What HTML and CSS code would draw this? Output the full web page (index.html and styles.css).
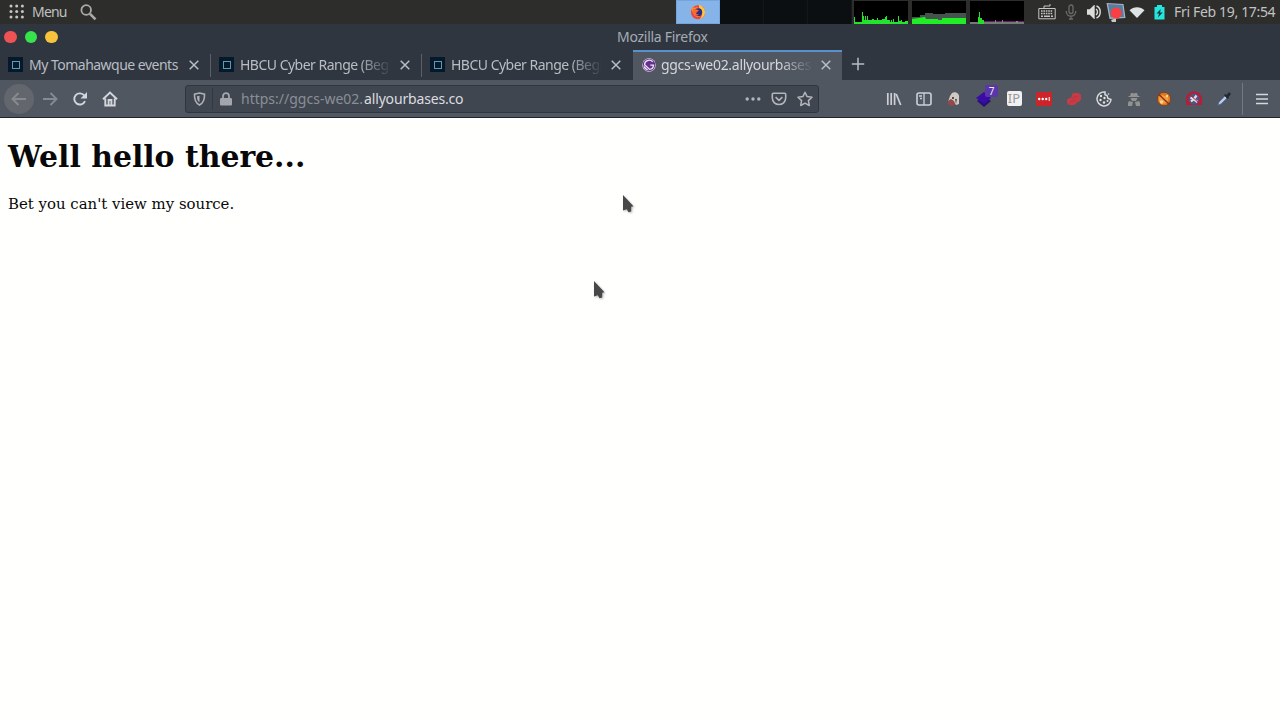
FILE: index.html
```
<!DOCTYPE html>
<html lang="en">
<head>
  <meta charset="UTF-8" />
  <title>Mozilla Firefox</title>
  <link rel="stylesheet" href="styles.css">
</head>
<body>

<div class="panel">
  <div class="launcher">
    <svg class="grid-icon" width="16" height="16" viewBox="0 0 16 16" fill="#c4c5c5"><circle cx="2" cy="2" r="1.5"/><circle cx="7.7" cy="2" r="1.5"/><circle cx="13.4" cy="2" r="1.5"/><circle cx="2" cy="7.5" r="1.5"/><circle cx="7.7" cy="7.5" r="1.5"/><circle cx="13.4" cy="7.5" r="1.5"/><circle cx="2" cy="13" r="1.5"/><circle cx="7.7" cy="13" r="1.5"/><circle cx="13.4" cy="13" r="1.5"/></svg>
    <span class="menu-label">Menu</span>
    <svg width="18" height="18" viewBox="0 0 18 18" fill="none" stroke="#a9aaa9"><circle cx="6.2" cy="7" r="4.8" stroke-width="1.8"/><path d="M10 10.8L15.5 16.3" stroke-width="2.6"/></svg>
  </div>
  <div class="workspaces">
    <div class="workspace current">
      <svg width="16" height="16" viewBox="0 0 16 16"><circle cx="8" cy="8.3" r="7" fill="#e9473c"/><path d="M9 .7C13 2 15.4 5 15 9c-.5 3-2.5 5.5-5.5 6.2C13 12 13 7 9 4z" fill="#ffc43c"/><path d="M1.2 5L3 2l1 2 3-1 2 2 3 2v3c-1 3-6 4-8 1z" fill="#ff8a2d"/><circle cx="8.3" cy="8.2" r="3.9" fill="#302a83"/><path d="M3 5l4 .5 2 1-2 1.4-1 2 3 .7c-2 2-5 1-6-1.6z" fill="#f56b31"/></svg>
    </div>
    <div class="workspace"></div>
    <div class="workspace"></div>
    <div class="workspace"></div>
  </div>
  <div class="graphs">
    <svg width="54" height="23" viewBox="0 0 54 23"><path fill="#777" d="M0 21h54v2H0z"/><path fill="#25e32c" d="M0 23v-7h1v5h7V11h1v4h1v4h1v-4h1v4h1v-4h1v4h4v-1h2v1h3v-2h1v2h4v-1h3v-2h1v-1h1v4h3v2h1v-2h1v2h1v-3h1v3h4v-6h1v5h2v-1h1v2h3v-1h3v4z"/></svg>
    <svg width="54" height="23" viewBox="0 0 54 23"><path fill="#46524d" d="M0 23v-7h8v-2h5v-2h8v1h12v-1h21v11z"/><path fill="#20ed25" d="M0 23v-5l7-1 5-1h1l1 2h12v1h4v-2h24v6z"/></svg>
    <svg width="54" height="23" viewBox="0 0 54 23"><path fill="#777" d="M0 21h54v2H0z"/><path fill="#6c176b" d="M13 20h41v1H13z"/><path fill="#26dd2a" d="M8 23v-7h1v-5h1v6h2v2h2v4z"/><path fill="#7d8a7d" d="M25 19h1v3h-1zM32 19h1v3h-1zM46 20h2v2h-2z"/></svg>
  </div>
  <div class="tray">
    <svg class="keyboard" width="18" height="16" viewBox="0 0 18 16" fill="none" stroke="#c5c6c5"><path d="M.8 4.5h16.4v10.3H.8zM6 4V2h6V0"/><path d="M3 7h12M3 9.5h12" stroke-width="1.6" stroke-dasharray="1.6 .8"/><path d="M3 12.2h2M6 12.2h6M13 12.2h2" stroke-width="1.6"/></svg>
    <svg class="mic" width="12" height="16" viewBox="0 0 12 16" fill="none" stroke="#6b6b6a"><rect x="4" y="1" width="4" height="8.5" rx="2" fill="#2d2d2b" stroke-width="1.3"/><path d="M1.2 7c0 7 9.6 7 9.6 0M6 12v3.5M4 15h4" stroke-width="1.3"/></svg>
    <svg class="speaker" width="15" height="14" viewBox="0 0 15 14" fill="none" stroke="#dcdcdc" stroke-width="1.4"><path d="M.5 5H3l4-4v12L3 9H.5z" fill="#dcdcdc"/><path d="M9 4c2 1.5 2 4.5 0 6M9.5 1c5 2 5 10 0 12"/></svg>
    <svg class="recorder" width="21" height="21" viewBox="0 0 21 21"><path d="M.5 1l17 1 2 14-16 1z" fill="#aab3bb"/><path d="M2 2l14.5 1 1.5 12L4.5 15.5z" fill="#587da5"/><path d="M5 18l5-2v4H6z" fill="#c8c8c8"/><circle cx="10.2" cy="11" r="5.5" fill="#fa3f42"/></svg>
    <svg class="wifi" width="16" height="13" viewBox="0 0 16 13"><path d="M8 12L.5 4.2c4-4 11-4 15 0z" fill="#e0e3e4"/></svg>
    <svg class="battery" width="11" height="15" viewBox="0 0 11 15"><path d="M3 0h5v2h2.5v12.5H.5V2H3z" fill="#24e6df"/><path d="M6.8 4L2.5 8.5H5L4 12.5l4.7-5H6z" fill="#173c3b"/></svg>
    <span class="clock">Fri Feb 19, 17:54</span>
  </div>
</div>

<div class="titlebar">
  <div class="lights">
    <span class="light red"></span>
    <span class="light green"></span>
    <span class="light yellow"></span>
  </div>
  <div class="window-title">Mozilla Firefox</div>
</div>

<div class="tabs">
  <div class="tab">
    <span class="favicon"></span>
    <span class="tab-title">My Tomahawque events</span>
    <svg class="close" width="10" height="10" viewBox="0 0 10 10"><path d="M.7.7l8.6 8.6M9.3.7L.7 9.3"/></svg>
  </div>
  <div class="tab">
    <span class="favicon"></span>
    <span class="tab-title fade">HBCU Cyber Range (Begi</span>
    <svg class="close" width="10" height="10" viewBox="0 0 10 10"><path d="M.7.7l8.6 8.6M9.3.7L.7 9.3"/></svg>
  </div>
  <div class="tab last">
    <span class="favicon"></span>
    <span class="tab-title fade">HBCU Cyber Range (Begi</span>
    <svg class="close" width="10" height="10" viewBox="0 0 10 10"><path d="M.7.7l8.6 8.6M9.3.7L.7 9.3"/></svg>
  </div>
  <div class="tab active">
    <svg class="gatsby" width="14" height="14" viewBox="0 0 14 14"><circle cx="7" cy="7" r="6.7" fill="#eee6f5"/><circle cx="7" cy="7" r="6.2" fill="#65318e"/><path d="M10.7 3.8C7.5.5 2.5 3 2.6 6.6l5 4.8c2-.2 3.7-2 3.9-4.2H8.3" fill="none" stroke="#eee6f5" stroke-width="1.3"/><path d="M1.5 7.3l5.3 5.2c-3 .1-5.2-2.2-5.3-5.2z" fill="#eee6f5"/></svg>
    <span class="tab-title fade">ggcs-we02.allyourbases.</span>
    <svg class="close" width="10" height="10" viewBox="0 0 10 10"><path d="M.7.7l8.6 8.6M9.3.7L.7 9.3"/></svg>
  </div>
  <svg class="new-tab" width="14" height="14" viewBox="0 0 14 14"><path d="M7 .8v12.4M.8 7h12.4"/></svg>
</div>

<div class="toolbar">
  <div class="nav">
    <span class="back"><svg width="16" height="16" viewBox="0 0 16 16"><path d="M15 8H1.5M7.5 2l-6 6 6 6"/></svg></span>
    <svg class="forward" width="16" height="16" viewBox="0 0 16 16"><path d="M1 8h13.5M8.5 2l6 6-6 6"/></svg>
    <svg class="reload" width="16" height="16" viewBox="0 0 16 16"><path d="M13 10.2A5.6 5.6 0 1 1 12.3 4.5"/><path d="M15 1v6.5H8.5z" class="solid"/></svg>
    <svg class="home" width="16" height="16" viewBox="0 0 16 16"><path d="M1 8.3L8 1.5l7 6.8M3.3 7.5v7h9.4v-7"/><path d="M6.6 14.5V9h2.8v5.5"/></svg>
  </div>
  <div class="urlbar">
    <svg class="shield" width="13" height="14" viewBox="0 0 13 14"><path d="M6.5 1l5 1.2c.2 5-1 8.7-5 10.8-4-2.1-5.2-5.8-5-10.8z" fill="none" stroke="#adb0b6" stroke-width="1.6"/><path d="M6.5 3.7v6.6c-2-1.3-2.6-3.3-2.5-6z" fill="#adb0b6"/></svg>
    <span class="divider"></span>
    <svg class="lock" width="12" height="14" viewBox="0 0 12 14"><path d="M3 7V4.2c0-4 6-4 6 0V7" fill="none" stroke="#a3a6ac" stroke-width="1.8"/><rect y="6" width="12" height="7.5" rx="1.2" fill="#a3a6ac"/></svg>
    <span class="url">https://ggcs-we02.<b>allyourbases.co</b></span>
    <div class="page-actions">
      <svg width="16" height="16" viewBox="0 0 16 16" fill="#b2b5ba"><circle cx="2.2" cy="8" r="1.7"/><circle cx="8" cy="8" r="1.7"/><circle cx="13.8" cy="8" r="1.7"/></svg>
      <svg width="16" height="16" viewBox="0 0 16 16" fill="none" stroke="#b2b5ba" stroke-width="1.6"><path d="M2.3 2.3h11.4q1 0 1 1v3.5c0 9-13.4 9-13.4 0V3.3q0-1 1-1z"/><path d="M4.6 6.2L8 9.4l3.4-3.2"/></svg>
      <svg width="16" height="16" viewBox="0 0 16 16" fill="none" stroke="#b2b5ba" stroke-width="1.5" stroke-linejoin="round"><path d="M8 1.2l2.1 4.4 4.9.7-3.6 3.3.9 4.9L8 12.2l-4.3 2.3.9-4.9L1 6.3l4.9-.7z"/></svg>
    </div>
  </div>
  <div class="extensions">
    <span class="ext"><svg width="16" height="16" viewBox="0 0 16 16" stroke="#ccd0d6" stroke-width="1.7"><path d="M1.8 2v12M5.2 2v12M8.6 2v12M10.2 3l4.5 11"/></svg></span>
    <span class="ext"><svg width="16" height="16" viewBox="0 0 16 16" fill="none" stroke="#ccd0d6" stroke-width="1.6"><rect x="1" y="2" width="14" height="12" rx="2"/><path d="M8 2v12M3 5h3M4 7.5h2" stroke-width="1.3"/></svg></span>
    <span class="ext"><svg width="16" height="16" viewBox="0 0 16 16"><path d="M6 2c4-2 8 1 7 5v6l-3 1-2-3-3 2-3-2 2-6z" fill="#d1c8c2"/><path d="M2 10l3-2 3 2 1 4-4 1-3-2z" fill="#944849"/><path d="M6 6h2v2H6zM9 8h2l-1 5z" fill="#514e51"/></svg></span>
    <span class="ext"><svg width="18" height="18" viewBox="0 0 18 18"><path d="M2 11l7-5 7 5-7 6z" fill="#251078"/><path d="M1 8l8-6 7 6-7 6z" fill="#3a0ca7"/></svg><span class="badge">7</span></span>
    <span class="ext"><span class="ip">IP</span></span>
    <span class="ext"><svg width="16" height="14" viewBox="0 0 16 14"><rect width="16" height="14" rx="1.5" fill="#cc2429"/><g fill="#fff"><circle cx="3.2" cy="7" r="1.2"/><circle cx="6.7" cy="7" r="1.2"/><circle cx="10.2" cy="7" r="1.2"/><path d="M12.7 5h1v4h-1z"/></g></svg></span>
    <span class="ext"><svg width="16" height="16" viewBox="0 0 16 16"><path d="M7 2h6l2 2v4l-2 3h-2l-1 2-2 1H3l-2-2V9l2-2h2l1-3z" fill="#c83b45"/><path d="M6 7l6-2M4 11l6-2" stroke="#b43742"/></svg></span>
    <span class="ext"><svg width="16" height="16" viewBox="0 0 16 16"><path d="M9 1a7 7 0 1 0 6 7.5l-3-1-1-3-2-.7z" fill="#4d535b" stroke="#d8dbde" stroke-width="1.5"/><g fill="#e0e2e4"><circle cx="5" cy="5" r="1.2"/><circle cx="8.5" cy="7" r="1.2"/><circle cx="4.5" cy="9" r="1.2"/><circle cx="8" cy="11.5" r="1.2"/><circle cx="11.5" cy="10" r="1"/><circle cx="12.5" cy="3" r=".8"/></g></svg></span>
    <span class="ext"><svg width="14" height="16" viewBox="0 0 14 16" fill="#92928f"><path d="M4 2h2l1 .7L8 2h2l1 3h1.5v1h-11V5H3zM3.5 7h7L9 10H5zM2 10l4 1-1 4H1v-3zM12 10l-4 1 1 4h4v-3z"/></svg></span>
    <span class="ext"><svg width="16" height="16" viewBox="0 0 16 16"><circle cx="8" cy="8" r="6.8" fill="#d97720" stroke="#7c4025"/><path d="M3 6l3-2 3 1 4 2-2 5-5 1-3-3z" fill="#f4a03a"/><circle cx="5.5" cy="11" r="1.7" fill="#f5d4a0"/><circle cx="11" cy="5" r="1.2" fill="#f5d4a0"/><path d="M2.7 3.2l10.5 10" stroke="#8a2c20" stroke-width="1.4"/></svg></span>
    <span class="ext"><svg width="16" height="16" viewBox="0 0 16 16"><path d="M0 14V8C0-2 16-2 16 8v6z" fill="#b91c37"/><circle cx="8" cy="8" r="5.5" fill="#4d5680"/><path d="M4.5 6.5l3 1.5 4 3M10.5 4.5L8 8l-3 2.5" fill="none" stroke="#dde1ed" stroke-width="2.2"/><path d="M3.5 3.5l9 8" stroke="#b91c37"/></svg></span>
    <span class="ext"><svg width="16" height="16" viewBox="0 0 16 16"><path d="M2 14l1-3 6-6 2 2-6 6z" fill="#b6cae9" stroke="#56649a" stroke-width=".7"/><path d="M8 4l1-1 1.5 1L13 1l2 2-2.5 3 .5 1-1.5 1z" fill="#24272e"/></svg></span>
  </div>
  <div class="app-menu"><svg width="12" height="12" viewBox="0 0 12 12" stroke="#d5d8dc" stroke-width="1.6"><path d="M0 1.5h12M0 6h12M0 10.5h12"/></svg></div>
</div>

<div class="page">
  <h1>Well hello there...</h1>
  <p>Bet you can't view my source.</p>
</div>

<svg class="cursor first" width="14" height="20" viewBox="0 0 14 20"><path d="M2 0l10.5 11.3-2.3.5v4.8l-2.7.7-1.7-3L2 15.5z"/></svg>
<svg class="cursor second" width="14" height="20" viewBox="0 0 14 20"><path d="M2 0l10.5 11.3-2.3.5v4.8l-2.7.7-1.7-3L2 15.5z"/></svg>

</body>
</html>
```

FILE: styles.css
```
body {
  margin: 0;
  height: 720px;
  overflow: hidden;
  background: #fffffe;
  font-family: "Noto Sans", sans-serif;
  font-size: 14px;
  color: #b9bdc3;
}

svg {
  display: block;
  flex: none;
}

.panel {
  display: flex;
  height: 24px;
  background: #2d2d2b;
}

.launcher {
  width: 667px;
  padding-left: 9px;
  display: flex;
  align-items: center;
  flex: none;
}

.menu-label {
  width: 48px;
  margin: -1px 0 0 7px;
  letter-spacing: -0.8px;
  color: #bec0c1;
}

.workspaces {
  display: flex;
}

.workspace {
  box-sizing: border-box;
  width: 44px;
  border-right: 1px solid #141618;
  background: #0c0f11;
}

.workspace.current {
  display: flex;
  align-items: center;
  justify-content: center;
  background: #86b3e8;
  border: 1px solid #75a5de;
}

.graphs {
  display: flex;
  gap: 4px;
  padding: 1px 0 0 2px;
}

.graphs svg {
  background: #000;
}

.tray {
  display: flex;
  align-items: center;
}

.keyboard { margin-left: 14px; }
.mic { margin-left: 9px; }
.speaker { margin-left: 10px; }
.recorder { margin-left: 4px; }
.wifi { margin-left: 2px; }
.battery { margin-left: 9px; }

.clock {
  margin: -1px 0 0 9px;
  letter-spacing: -0.33px;
  white-space: nowrap;
  color: #c1c3c4;
}

.titlebar {
  display: flex;
  height: 26px;
  align-items: center;
  background: #2f3640;
}

.lights {
  display: flex;
  gap: 8px;
  width: 613px;
  padding-left: 4px;
}

.light {
  width: 12.5px;
  height: 12.5px;
  border-radius: 50%;
}

.red { background: #ee5253; }
.green { background: #37e34b; }
.yellow { background: #f7c33c; }

.window-title {
  margin-top: -1px;
  letter-spacing: -0.27px;
  color: #a5abb3;
}

.tabs {
  display: flex;
  height: 30px;
  align-items: center;
  background: #2f3640;
}

.tab {
  box-sizing: border-box;
  display: flex;
  align-items: center;
  width: 211px;
  height: 30px;
  padding: 0 0 1px 8px;
  background: linear-gradient(#59606a, #59606a) right 4px / 1px 23px no-repeat;
}

.tab.last {
  background: none;
}

.tab.active {
  width: 209px;
  padding: 0 0 3px 9px;
  background: #515761;
  border-top: 2px solid #5b91cb;
  color: #d4d7da;
}

.favicon {
  box-sizing: border-box;
  display: flex;
  align-items: center;
  justify-content: center;
  width: 15px;
  height: 15px;
  background: #06192b;
}

.favicon::before {
  content: "";
  width: 6px;
  height: 6px;
  border: 1px solid #5b9db7;
}

.tab-title {
  width: 150px;
  margin: -1px 10px 0 6px;
  overflow: hidden;
  white-space: nowrap;
  letter-spacing: -0.51px;
}

.active .tab-title {
  margin-left: 5px;
  letter-spacing: -0.3px;
}

.fade {
  -webkit-mask-image: linear-gradient(to right, #000 118px, transparent 152px);
  mask-image: linear-gradient(to right, #000 118px, transparent 152px);
}

.close, .new-tab {
  fill: none;
  stroke: #b9bdc3;
  stroke-width: 1.5;
}

.new-tab {
  margin: -2px 0 0 9px;
}

.toolbar {
  box-sizing: border-box;
  display: flex;
  height: 38px;
  align-items: center;
  background: #515761;
  border-bottom: 1px solid #20242c;
}

.nav {
  display: flex;
  align-items: center;
  width: 181px;
  padding-left: 4px;
  fill: none;
  stroke: #d3d6db;
  stroke-width: 1.9;
}

.back {
  display: flex;
  align-items: center;
  justify-content: center;
  width: 30px;
  height: 30px;
  border-radius: 50%;
  background: #63676d;
  stroke: #868b92;
}

.forward {
  margin-left: 8px;
  stroke: #858b95;
}

.reload { margin-left: 14px; }
.home { margin-left: 14px; }

.solid {
  fill: #d3d6db;
  stroke: none;
}

.urlbar {
  box-sizing: border-box;
  display: flex;
  align-items: center;
  width: 634px;
  height: 28px;
  padding-left: 7px;
  background: #40464f;
  border: 1px solid #31363e;
  border-radius: 3px;
}

.divider {
  width: 1px;
  height: 22px;
  margin: 0 7px 0 6px;
  background: #343941;
}

.url {
  margin-left: 9px;
  color: #898f98;
}

.url b {
  margin-left: 1px;
  font-weight: normal;
  letter-spacing: -0.17px;
  color: #dadde0;
}

.page-actions {
  display: flex;
  gap: 10px;
  margin-left: auto;
  padding-right: 5px;
}

.extensions {
  display: flex;
  width: 363px;
  margin-left: 60px;
}

.ext {
  position: relative;
  display: flex;
  align-items: center;
  justify-content: center;
  width: 30px;
  height: 30px;
}

.badge {
  position: absolute;
  top: 1px;
  left: 16px;
  width: 13px;
  height: 12px;
  border-radius: 2px;
  background: #5b35aa;
  color: #eee;
  font-size: 10px;
  line-height: 12px;
  text-align: center;
}

.ip {
  width: 15px;
  height: 15px;
  border-radius: 2px;
  background: #f1f1f1;
  color: #999;
  font-size: 13px;
  line-height: 15px;
  text-align: center;
}

.app-menu {
  display: flex;
  align-items: center;
  height: 32px;
  padding-left: 13px;
  border-left: 1px solid #747981;
}

.page {
  padding: 0 8px;
  display: flow-root;
  font-family: "DejaVu Serif", serif;
  font-size: 14.93px;
  color: #080808;
}

h1 {
  margin: 20px 0;
  font-size: 29.87px;
  line-height: 37px;
}

p {
  margin: 0;
  line-height: 18px;
}

.cursor {
  position: absolute;
  fill: #484848;
  filter: drop-shadow(1px 1px 1px #bbb);
}

.first {
  left: 621px;
  top: 195px;
}

.second {
  left: 592px;
  top: 281px;
}
```
